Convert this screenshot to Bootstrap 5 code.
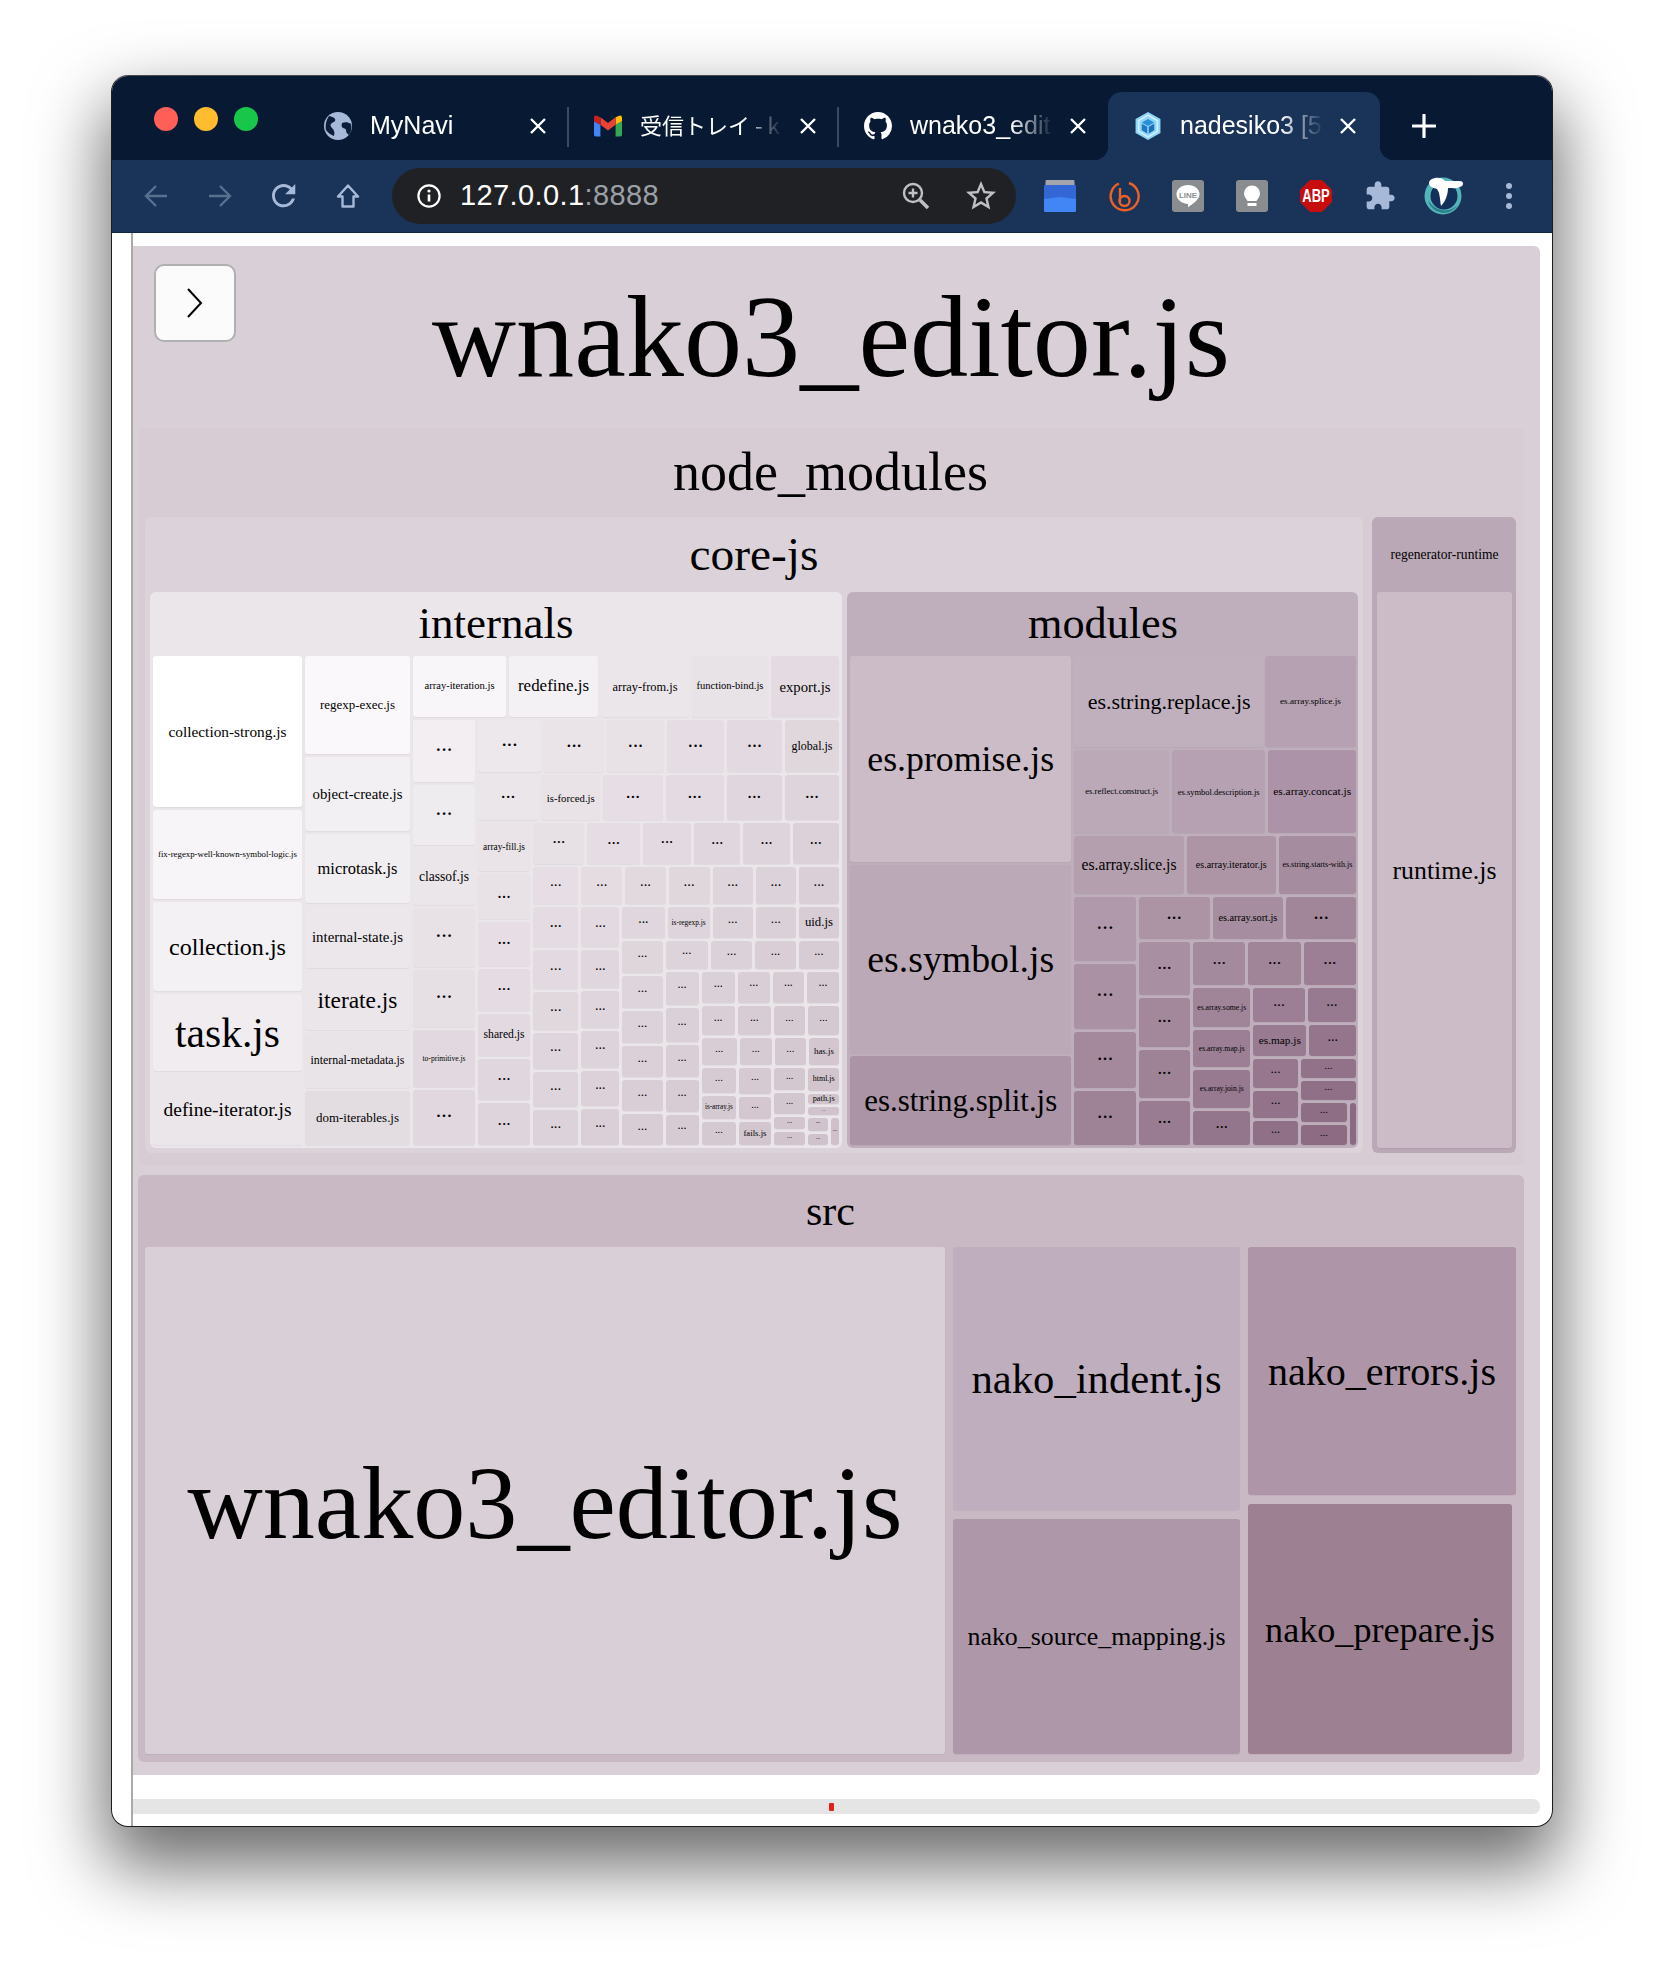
<!DOCTYPE html>
<html lang="en">
<head>
<meta charset="utf-8">
<title>nadesiko3</title>
<link rel="stylesheet" href="https://cdn.jsdelivr.net/npm/bootstrap@5.3.0/dist/css/bootstrap.min.css">
<style>
html,body{margin:0;background:#fff}
body{width:1664px;height:1974px;overflow:hidden;font-family:"Liberation Sans",sans-serif}
.win{margin:75px 0 0 111px;width:1442px;height:1752px;border:1px solid #1c1c1c;border-top-color:#4a4a4a;border-radius:17px;box-shadow:0 34px 70px 6px rgba(0,0,0,.58);background:#fff}
.tabbar{height:84px;background:#081a33;flex:none}
.light{width:24px;height:24px;border-radius:50%;margin-top:31px}
.lights{padding-left:42px;gap:16px;width:186px}
.tabx{width:270px;height:68px;margin-top:16px;padding-left:26px;color:#fff;font-size:25px;position:relative}
.tabx:not(.on):not(.nosep)::after{content:"";position:absolute;right:-1px;top:15px;height:40px;width:2px;background:#3a4a63}
.tabx.on{background:#1a3459;border-radius:14px 14px 0 0;width:272px}
.tabx.on::before,.tabx.on::after{content:"";position:absolute;bottom:0;width:14px;height:14px}
.tabx.on::before{left:-14px;background:radial-gradient(circle at 0 0,#081a33 14px,#1a3459 14.5px)}
.tabx.on::after{right:-14px;background:radial-gradient(circle at 100% 0,#081a33 14px,#1a3459 14.5px)}
.fav{width:28px;height:28px;flex:none;margin-right:18px}
.tabt{width:148px;white-space:nowrap;-webkit-mask-image:linear-gradient(to right,#000 68%,transparent 97%);mask-image:linear-gradient(to right,#000 68%,transparent 97%)}
.cjk{font-family:"Noto Sans CJK JP",sans-serif;font-size:22px}
.closex{width:16px;height:16px;margin-left:12px;flex:none}
.plus{margin:16px 0 0 32px;align-self:center;width:24px;height:24px}
.toolb{height:73px;background:#1a3459;border-bottom:1px solid #0f2441;padding-left:32px;flex:none}
.tbi{width:24px;height:24px;margin-right:40px;flex:none}
.tbi:nth-child(4){margin-right:32px}
.omni{width:624px;height:56px;background:#202124;border-radius:28px;padding:0 20px 0 25px;flex:none;margin-right:28px}
.url{font-size:29px;color:#fff;margin-left:19px;letter-spacing:.4px}
.url span{color:#9aa0a6}
.ext{width:32px;height:32px;margin-right:32px;flex:none}
.page{margin-left:19px;border-left:2px solid #a9a9a9;padding-top:13px;padding-right:12px;flex:1 1 0;min-height:0}
.rootp{height:1529px;background:#d9cfd7;border-radius:0 6px 6px 0;position:relative;padding:0 16px 13px 5px}
.togg{position:absolute;left:21px;top:18px;width:82px;height:78px;background:#fbfbfb;border:2px solid #b0b0b0;border-radius:10px;padding:0;display:flex;align-items:center;justify-content:center}
.togg:hover{background:#fbfbfb;border-color:#b0b0b0}
.rootttl{height:182px;padding-bottom:6px;flex:none}
.txt{color:#000;white-space:nowrap;line-height:1;padding-top:.05em;font-family:"Liberation Serif",serif}
.txt.dots{padding-top:0;transform:translateY(-.3em)}
.txt.hd{padding-top:0}
.tile{border-radius:3px;box-shadow:0 1px 1px rgba(60,30,50,.06);min-width:0;min-height:0}
.pane{border-radius:6px;min-width:0;min-height:0}
.mapbody{min-width:0;min-height:0}
.scrollz{height:15px;margin-top:24px;background:#e5e5e5;border-radius:0 7px 7px 0;padding-left:696px}
.redm{width:5px;height:8px;background:#e3211b;border-radius:1px}
</style>
</head>
<body>
<div class="win d-flex flex-column overflow-hidden">
  <div class="tabbar d-flex">
    <div class="lights d-flex">
      <div class="light" style="background:#ff5f57"></div>
      <div class="light" style="background:#febc2e"></div>
      <div class="light" style="background:#18c64a"></div>
    </div>
    <div class="tabx d-flex align-items-center">
      <svg class="fav" viewBox="0 0 28 28"><circle cx="14" cy="14" r="14" fill="#a6b9d8"/><path d="M5 4c3 1 5 1 6 3s-1 3-3 4-2 3 0 5 3 4 2 8c-3-1-6-3-8-6-1-4 0-10 3-14zM18 11c3-1 6-1 9 1 1 4 0 8-2 11-2-1-3-3-3-5s-3-1-4-3 0-3 0-4z" fill="#0b1d38"/></svg>
      <div class="tabt">MyNavi</div>
      <svg class="closex" viewBox="0 0 16 16"><path d="M1 1l14 14M15 1L1 15" stroke="#fff" stroke-width="2.4"/></svg>
    </div>
    <div class="tabx d-flex align-items-center">
      <svg class="fav" viewBox="0 0 24 24"><g transform="translate(0 3)"><path d="M0 5v11.5A1.5 1.5 0 0 0 1.5 18H5.5V8z" fill="#4285f4"/><path d="M24 5v11.5a1.5 1.5 0 0 1-1.5 1.5H18.5V8z" fill="#34a853"/><path d="M18.5 8V1.5L21.6.3A1.6 1.6 0 0 1 24 1.6V5z" fill="#fbbc04"/><path d="M5.5 8V1.5L12 6.4l6.5-4.9V8L12 12.9z" fill="#ea4335"/><path d="M0 5V1.6A1.6 1.6 0 0 1 2.4.3L5.5 1.5V8z" fill="#c5221f"/></g></svg>
      <div class="tabt"><span class="cjk">受信トレイ - k</span></div>
      <svg class="closex" viewBox="0 0 16 16"><path d="M1 1l14 14M15 1L1 15" stroke="#fff" stroke-width="2.4"/></svg>
    </div>
    <div class="tabx nosep d-flex align-items-center">
      <svg class="fav" viewBox="0 0 16 16"><path fill="#fff" d="M8 0C3.58 0 0 3.58 0 8c0 3.54 2.29 6.53 5.47 7.59.4.07.55-.17.55-.38 0-.19-.01-.82-.01-1.49-2.01.37-2.53-.49-2.69-.94-.09-.23-.48-.94-.82-1.13-.28-.15-.68-.52-.01-.53.63-.01 1.08.58 1.23.82.72 1.21 1.87.87 2.33.66.07-.52.28-.87.51-1.07-1.78-.2-3.64-.89-3.64-3.95 0-.87.31-1.59.82-2.15-.08-.2-.36-1.02.08-2.12 0 0 .67-.21 2.2.82.64-.18 1.32-.27 2-.27.68 0 1.36.09 2 .27 1.53-1.04 2.2-.82 2.2-.82.44 1.1.16 1.92.08 2.12.51.56.82 1.27.82 2.15 0 3.07-1.87 3.75-3.65 3.95.29.25.54.73.54 1.48 0 1.07-.01 1.93-.01 2.2 0 .21.15.46.55.38A8.013 8.013 0 0016 8c0-4.42-3.58-8-8-8z"/></svg>
      <div class="tabt">wnako3_edit</div>
      <svg class="closex" viewBox="0 0 16 16"><path d="M1 1l14 14M15 1L1 15" stroke="#fff" stroke-width="2.4"/></svg>
    </div>
    <div class="tabx on d-flex align-items-center">
      <svg class="fav" viewBox="0 0 32 36"><polygon points="16,0 32,9 32,27 16,36 0,27 0,9" fill="#8ed6fb"/><polygon points="16,3 29,10.5 29,25.5 16,33 3,25.5 3,10.5" fill="#d4effd"/><polygon points="16,5 27,11.5 27,24.5 16,31 5,24.5 5,11.5" fill="#8ed6fb"/><polygon points="16,9 24,13.5 16,18 8,13.5" fill="#2b8fd6"/><polygon points="8,15 15,19 15,27.5 8,23.5" fill="#1c78c0"/><polygon points="24,15 17,19 17,27.5 24,23.5" fill="#1c6fb3"/></svg>
      <div class="tabt">nadesiko3 [5</div>
      <svg class="closex" viewBox="0 0 16 16"><path d="M1 1l14 14M15 1L1 15" stroke="#fff" stroke-width="2.4"/></svg>
    </div>
    <svg class="plus" viewBox="0 0 24 24"><path d="M12 1v22M1 12h22" stroke="#fff" stroke-width="3.2" stroke-linecap="round"/></svg>
  </div>

  <div class="toolb d-flex align-items-center">
    <svg class="tbi" viewBox="0 0 24 24" fill="none" stroke="#56708f" stroke-width="2.4"><path d="M23 12H2M12 2L2 12l10 10"/></svg>
    <svg class="tbi" viewBox="0 0 24 24" fill="none" stroke="#56708f" stroke-width="2.4"><path d="M1 12h21M12 2l10 10-10 10"/></svg>
    <svg class="tbi" viewBox="4 4 16.500 16.500" fill="#a6b9d8"><path d="M17.65 6.35C16.2 4.9 14.21 4 12 4c-4.42 0-7.99 3.58-7.99 8s3.57 8 7.99 8c3.73 0 6.84-2.55 7.73-6h-2.08c-.82 2.33-3.04 4-5.65 4-3.31 0-6-2.69-6-6s2.69-6 6-6c1.66 0 3.14.69 4.22 1.78L13 11h7V4l-2.35 2.35z"/></svg>
    <svg class="tbi" viewBox="0 0 24 24" fill="none" stroke="#a6b9d8" stroke-width="2.4" stroke-linejoin="round"><path d="M12 1.5L22 12.5H17.5V22.5H6.5V12.5H2z"/></svg>
    <div class="omni d-flex align-items-center">
      <svg width="24" height="24" viewBox="0 0 24 24" fill="none"><circle cx="12" cy="12" r="10.6" stroke="#fff" stroke-width="2.2"/><path d="M12 10.5v7" stroke="#fff" stroke-width="2.6"/><circle cx="12" cy="7" r="1.6" fill="#fff"/></svg>
      <div class="url">127.0.0.1<span>:8888</span></div>
      <div class="ms-auto d-flex align-items-center" style="gap:36px">
        <svg width="28" height="28" viewBox="0 0 28 28" fill="none" stroke="#bdc1c6" stroke-width="2.4"><circle cx="11" cy="11" r="9"/><path d="M11 6.5v9M6.5 11h9"/><path d="M18 18l8 8" stroke-width="3.6"/></svg>
        <svg width="30" height="30" viewBox="2 2 20 20" fill="#bdc1c6"><path d="M22 9.24l-7.19-.62L12 2 9.19 8.63 2 9.24l5.46 4.73L5.82 21 12 17.27 18.18 21l-1.63-7.03L22 9.24zM12 15.4l-3.76 2.27 1-4.28-3.32-2.88 4.38-.38L12 6.1l1.71 4.04 4.38.38-3.32 2.88 1 4.28L12 15.4z"/></svg>
      </div>
    </div>
    <svg class="ext" viewBox="0 0 32 32"><rect x="1.500" width="29" height="6" rx="1" fill="#a3a7ad"/><path d="M0 5h32v14H0z" fill="#3367d6"/><path d="M0 30.500V19l16-2 16 2v11.500a1.500 1.500 0 0 1-1.500 1.500h-29A1.500 1.500 0 0 1 0 30.500z" fill="#4285f4"/></svg>
    <svg class="ext" viewBox="0 0 32 32" fill="none" stroke="#ee6123" stroke-width="2.4"><path d="M11 3.500A14 14 0 1 0 21 3"/><path d="M12 8v14"/><circle cx="16.500" cy="21" r="5"/></svg>
    <svg class="ext" viewBox="0 0 32 32"><rect width="32" height="32" rx="3" fill="#8a8d90"/><path d="M16 5c6.500 0 11.500 4 11.500 9.200 0 4.600-5.500 9-11 12.800-.5.300-.8 0-.6-.6l.3-2.400C9.800 23.500 4.500 19.600 4.500 14.200 4.500 9 9.500 5 16 5z" fill="#fff"/><text x="16" y="17.500" font-size="8" text-anchor="middle" fill="#8a8d90" font-weight="700" font-family="Liberation Sans">LINE</text></svg>
    <svg class="ext" viewBox="0 0 32 32"><rect width="32" height="32" rx="3" fill="#8a8d90"/><path d="M16 5.500a8 8 0 0 1 8 8c0 3.500-2.500 5.500-3.500 7.500h-9c-1-2-3.500-4-3.500-7.500a8 8 0 0 1 8-8z" fill="#fff"/><rect x="11.500" y="23" width="9" height="3" fill="#fff"/></svg>
    <svg class="ext" viewBox="0 0 32 32"><polygon points="10,0 22,0 32,10 32,22 22,32 10,32 0,22 0,10" fill="#c70d0d"/><text transform="translate(16 22) scale(1 1.35)" font-size="13" text-anchor="middle" fill="#fff" font-weight="700" font-family="Liberation Sans">ABP</text></svg>
    <svg class="ext" viewBox="0 0 24 24" fill="#a6b9d8"><path d="M20.5 11H19V7c0-1.100-.9-2-2-2h-4V3.500C13 2.120 11.880 1 10.500 1S8 2.120 8 3.500V5H4c-1.100 0-1.990.9-1.990 2v3.800H3.500c1.490 0 2.700 1.210 2.700 2.700s-1.210 2.700-2.700 2.700H2V20c0 1.100.9 2 2 2h3.800v-1.500c0-1.490 1.210-2.700 2.700-2.700 1.490 0 2.700 1.210 2.700 2.700V22H17c1.100 0 2-.9 2-2v-4h1.500c1.380 0 2.500-1.120 2.500-2.500S21.880 11 20.500 11z"/></svg>
    <svg class="ext" viewBox="0 0 40 40" style="transform:scale(1.25)"><circle cx="19" cy="20" r="18.500" fill="#54b4b9"/><path d="M4 24a16 16 0 0 0 30 4c-4 6-13 8-20 5-5-2-8-6-10-9z" fill="#2b7f8a"/><circle cx="20" cy="20" r="13.500" fill="#12305a"/><path d="M8 3c4-2 10-2 13 2h15c3 0 4 3 2 5-2 1-6 3-10 2l-4 0c0 7-3 14-7 18-1-6-1-13-4-17-3-1-8-2-8-6 0-2 1-3 3-4z" fill="#fff"/></svg>
    <svg width="8" height="28" viewBox="0 0 8 28" style="margin-left:13px"><circle cx="4" cy="4" r="3" fill="#a6b9d8"/><circle cx="4" cy="14" r="3" fill="#a6b9d8"/><circle cx="4" cy="24" r="3" fill="#a6b9d8"/></svg>
  </div>

  <div class="page d-flex flex-column">
    <div class="rootp d-flex flex-column" id="rootp">
      <button type="button" class="btn togg" aria-label="toggle"><svg width="16" height="30" viewBox="0 0 16 30" fill="none" stroke="#000" stroke-width="2"><path d="M1 1l13 14L1 29"/></svg></button>
      <div class="rootttl d-flex align-items-center justify-content-center"><span class="txt" data-tw="798">wnako3_editor.js</span></div>
      <div id="map" class="flex-grow-1 d-flex flex-column mapbody" style="gap:10px"></div>
    </div>
    <div class="scrollz d-flex align-items-center"><div class="redm"></div></div>
  </div>
</div>

<script>
let zone=0;
const mk=(cls,w)=>{const d=document.createElement('div');d.className=cls;if(w!=null)d.style.flex=`${w} ${w} 0`;return d;};
const T=(w,t,tw,bg)=>{
  const d=mk('tile d-flex align-items-center justify-content-center overflow-hidden',w);
  if(bg)d.style.background=bg;else d.dataset.zone=zone;
  if(t){const s=document.createElement('span');s.className='txt';s.textContent=t;if(tw)s.dataset.tw=tw;if(t==='...')s.classList.add('dots');d.appendChild(s);}
  return d;
};
const D=w=>T(w,'...');
const box=(cls,w,kids,g)=>{const d=mk(cls+' mapbody',w);d.style.gap=g+'px';kids.forEach(k=>d.appendChild(k));return d;};
const R=(w,kids,g=3)=>box('d-flex',w,kids,g);
const C=(w,kids,g=3)=>box('d-flex flex-column',w,kids,g);
/* w is the pane's content size: padding is added on top of it by flexbox */
const P=(w,title,tw,head,bg,pad,body)=>{
  const d=mk('pane d-flex flex-column',w);d.style.background=bg;d.style.padding=pad;
  const h=document.createElement('div');h.className='d-flex align-items-center justify-content-center flex-shrink-0';h.style.height=head+'px';
  const s=document.createElement('span');s.className='txt hd';s.textContent=title;s.dataset.tw=tw;h.appendChild(s);d.appendChild(h);
  body.style.flex='1 1 0';d.appendChild(body);return d;
};

zone=1;
const internals=R(null,[
  C(149,[T(151,'collection-strong.js',118,'#ffffff'),T(89,'fix-regexp-well-known-symbol-logic.js',139,'#f7f5f7'),T(89,'collection.js',117,'#f3f1f3'),T(77,'task.js',105,'#f0ecef'),T(71,'define-iterator.js',128,'#ebe6ea')]),
  C(105,[T(98,'regexp-exec.js',75,'#faf8fa'),T(74,'object-create.js',90,'#f2f0f2'),T(69,'microtask.js',80,'#f1eef1'),T(62,'internal-state.js',91,'#ece7eb'),T(59,'iterate.js',80,'#ebe6ea'),T(55,'internal-metadata.js',94,'#e9e4e8'),T(54,'dom-iterables.js',83,'#e3dce1')]),
  C(426,[
    R(61,[T(93,'array-iteration.js',70,'#f8f6f8'),T(89,'redefine.js',71,'#f4f1f4'),T(88,'array-from.js',65,'#ebe6ea'),T(76,'function-bind.js',67,'#e8e3e7'),T(68,'export.js',51,'#e3dbe1')]),
    R(425,[
      C(62,[T(62,'...',0,'#f2eef1'),T(60,'...',0,'#efecef'),T(57,'classof.js',50,'#ebe6ea'),T(59,'...',0,'#e8e2e6'),T(57,'...',0,'#e6e0e4'),T(57,'to-primitive.js',43,'#e1d9df'),T(55,'...',0,'#e0d8de')]),
      C(361,[
        R(52,[D(63),D(60),D(57),D(57),D(55),T(54,'global.js',41)]),
        R(45,[D(60),T(59,'is-forced.js',48),D(59),D(58),D(55),D(54)]),
        R(320,[
          C(52,[T(47,'array-fill.js',42),D(44),D(43),D(42),T(41,'shared.js',41),D(41),D(41)]),
          C(305,[
            R(40,[D(51),D(52),D(48),D(46),D(46),D(46)]),
            R(277,[
              C(45,[D(37),D(39),D(38),D(37),D(35),D(35),D(34)]),
              C(257,[
                R(37,[D(41),D(40),D(41),D(40),D(40),D(40)]),
                R(237,[
                  C(38,[D(39),D(38),D(36),D(36),D(35),D(35)]),
                  C(216,[
                    R(31,[D(42),T(42,'is-regexp.js',34),D(40),D(40),T(40,'uid.js',28)]),
                    R(202,[
                      C(40,[D(31),D(31),D(31),D(31),D(30),D(30)]),
                      C(173,[
                        R(27,[D(42),D(41),D(40),D(40)]),
                        R(171,[
                          C(33,[D(33),D(33),D(32),D(31),D(30)]),
                          C(137,[
                            R(31,[D(33),D(32),D(31),D(32)]),
                            R(29,[D(33),D(33),D(31),D(31)]),
                            R(26,[D(35),D(32),D(31),T(30,'has.js',20)]),
                            R(76,[
                              C(35,[D(25),T(23,'is-array.js',28),D(23)]),
                              C(32,[D(25),D(22),T(22,'fails.js',23)]),
                              C(32,[D(21),D(20),D(12),D(12)]),
                              C(31,[T(22,'html.js',22),T(10,'path.js',22),D(8),R(26,[C(19,[D(12),D(11)]),D(8)])])
                            ])
                          ])
                        ])
                      ])
                    ])
                  ])
                ])
              ])
            ])
          ])
        ])
      ])
    ])
  ])
]);

zone=2;
const modules=R(null,[
  C(221,[T(207,'es.promise.js',187,'#cbbcc7'),T(189,'es.symbol.js',187,'#bca9b8'),T(90,'es.string.split.js',193,'#ab94a6')]),
  C(281,[
    R(91,[T(189,'es.string.replace.js',163,'#c0b0be'),T(91,'es.array.splice.js',61,'#b5a1b2')],1),
    R(82,[T(95,'es.reflect.construct.js',73,'#bba9b8'),T(94,'es.symbol.description.js',82,'#b5a1b2'),T(88,'es.array.concat.js',78,'#ac93a7')]),
    R(58,[T(109,'es.array.slice.js',95),T(89,'es.array.iterator.js',71),T(77,'es.string.starts-with.js',70)]),
    R(247,[
      C(61,[D(64),D(64),D(56),D(54)]),
      C(216,[
        R(42,[D(70),T(70,'es.array.sort.js',59),D(69)]),
        R(202,[
          C(51,[D(52),D(49),D(47),D(44)]),
          C(162,[
            R(43,[D(52),D(52),D(52)]),
            R(156,[
              C(57,[T(38,'es.array.some.js',49),T(37,'es.array.map.js',46),T(37,'es.array.join.js',44),D(34)]),
              C(102,[
                R(34,[D(51),D(48)]),
                R(30,[T(52,'es.map.js',42),D(46)]),
                R(86,[
                  C(44,[D(29),D(27),D(24)]),
                  C(55,[D(19),D(18),R(41,[C(46,[D(19),D(19)]),T(6)])])
                ])
              ])
            ])
          ])
        ])
      ])
    ])
  ])
]);

const corejs=P(1208,'core-js',129,75,'#dcd2da','0 5px 5px',R(null,[
  P(686,'internals',155,64,'#ebe6ea','0 3px 3px',internals),
  P(506,'modules',150,64,'#bfafbd','0 2px 3px 3px',modules)
],5));
const regen=P(135,'regenerator-runtime',108,75,'#baa8b7','0 4px 5px 5px',R(null,[T(135,'runtime.js',104,'#cbbcc7')],0));
const nodeM=P(725,'node_modules',315,89,'#d7ccd4','0 8px 12px 7px',R(null,[corejs,regen],9));
const src=P(579,'src',49,72,'#c9b9c4','0 8px 8px 7px',R(null,[
  T(800,'wnako3_editor.js',715,'#d9cfd7'),
  C(287,[T(263,'nako_indent.js',250,'#bfaebd'),T(235,'nako_source_mapping.js',258,'#ae97a9')],9),
  C(268,[T(248,'nako_errors.js',228,'#ae96a8'),R(250,[T(264,'nako_prepare.js',230,'#9e8093'),mk('mapbody',4)],0)],9)
],8));
const map=document.getElementById('map');map.appendChild(nodeM);map.appendChild(src);

/* tile shade from position: white at top-left of a package, darker toward bottom-right */
const ctx=document.createElement('canvas').getContext('2d');ctx.font='100px "Liberation Serif"';
document.querySelectorAll('.txt').forEach(s=>{
  const b=s.parentElement.getBoundingClientRect();
  let tw=+s.dataset.tw;
  if(!tw)tw=Math.min(17,Math.sqrt(b.width*b.height)*.28,b.width-2,b.height*.42);
  s.style.fontSize=(tw/ctx.measureText(s.textContent).width*100).toFixed(2)+'px';
});
document.querySelectorAll('.tile[data-zone]').forEach(d=>{
  const r=d.getBoundingClientRect(),x=r.left+r.width/2,y=r.top+r.height/2;
  const L=d.dataset.zone==='1'?Math.min(255,257-.045*(x-153)-.04*(y-656)):203-.075*(x-960)-.095*(y-760);
  const k=255-L;
  d.style.background=`rgb(${Math.round(L)},${Math.round(L-.29*k)},${Math.round(L-.08*k)})`;
});
</script>
<script src="https://cdn.jsdelivr.net/npm/bootstrap@5.3.0/dist/js/bootstrap.bundle.min.js"></script>
</body>
</html>
